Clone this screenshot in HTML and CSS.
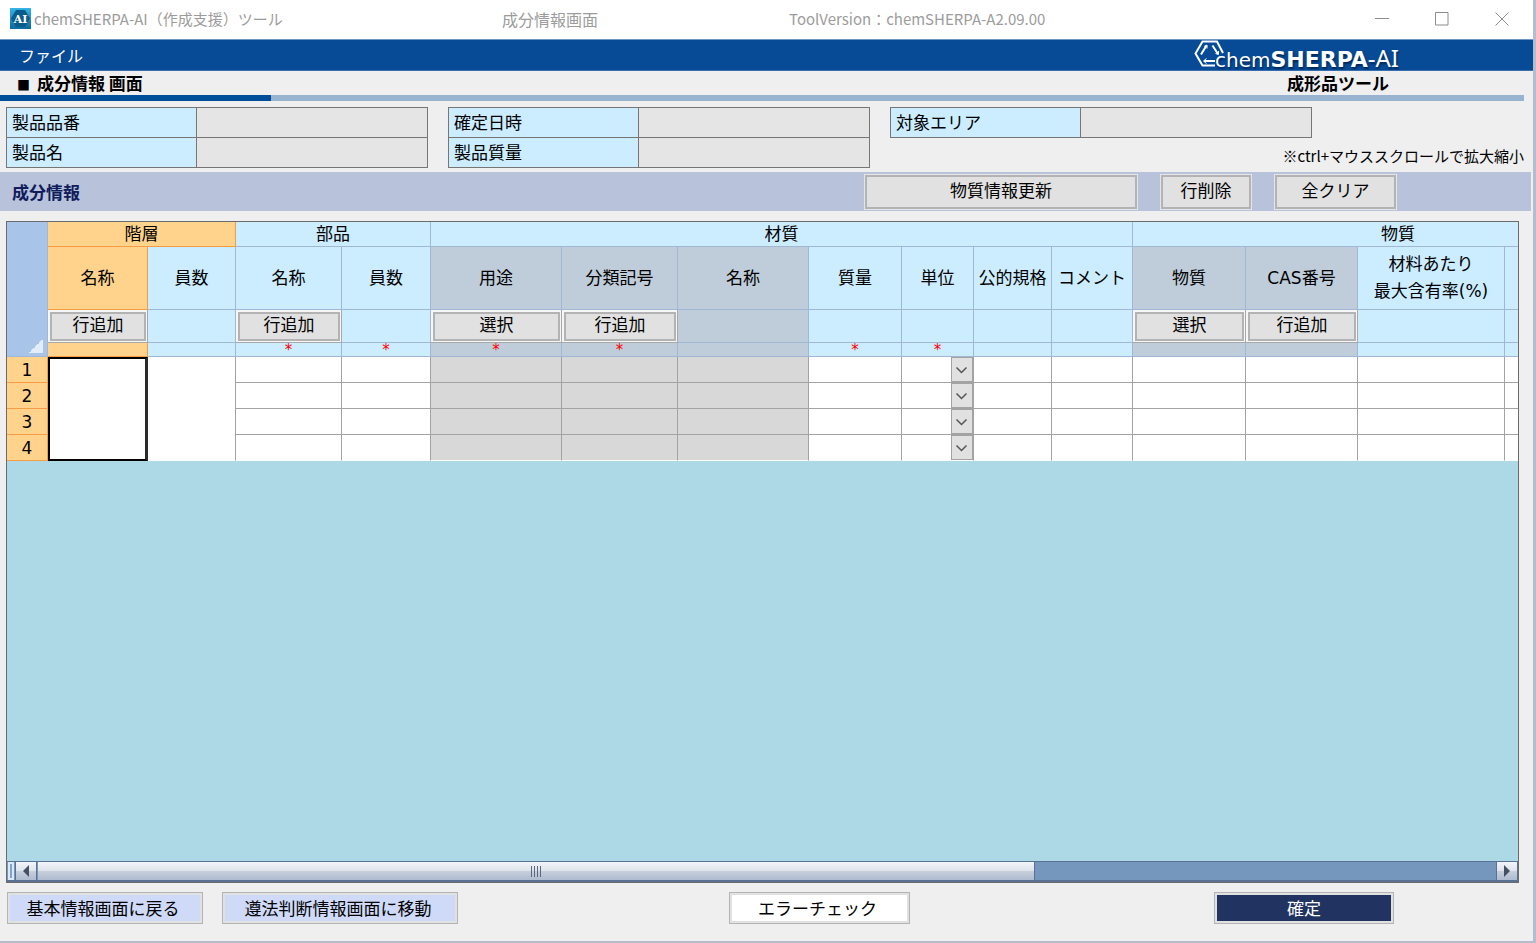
FILE: index.html
```html
<!DOCTYPE html>
<html lang="ja">
<head>
    <meta charset="utf-8">
    <title>chemSHERPA-AI 成分情報画面</title>
    <link rel="stylesheet" href="styles.css">
</head>
<body>
<div class="window">
    <header class="titlebar">
        <svg class="app-icon" viewBox="0 0 21 21">
            <defs>
                <linearGradient id="iconBg" x1="0" y1="0" x2="0" y2="1">
                    <stop offset="0" stop-color="#35b4e6"/>
                    <stop offset="1" stop-color="#0d6a9c"/>
                </linearGradient>
            </defs>
            <rect width="21" height="21" fill="url(#iconBg)"/>
            <path d="M6 2h9l5 8.500-5 8.500H6l-5-8.500z" fill="#0b5c8a"/>
            <text x="10.500" y="14.500" text-anchor="middle" class="app-icon-text">AI</text>
        </svg>
        <span class="title-app">chemSHERPA-AI（作成支援）ツール</span>
        <span class="title-screen">成分情報画面</span>
        <span class="title-version">ToolVersion：chemSHERPA-A2.09.00</span>
        <div class="window-buttons">
            <button type="button" aria-label="最小化"><svg viewBox="0 0 14 14"><path d="M0 6.500h14"/></svg></button>
            <button type="button" aria-label="最大化"><svg viewBox="0 0 14 14"><path d="M.5.5h12.500v12.500H.5z"/></svg></button>
            <button type="button" aria-label="閉じる"><svg viewBox="0 0 14 14"><path d="M.5.5l13 13M13.500.5l-13 13"/></svg></button>
        </div>
    </header>

    <nav class="menubar">
        <a href="#" class="menu-file">ファイル</a>
        <div class="logo">
            <svg class="logo-hex" viewBox="0 0 31 27">
                <path d="M29 13L23 1.500H8.500L1.500 13.500 8.500 25.500H21"/>
                <path d="M12.500 5.500L7 14.500M18.500 5.500L24 14M21 21H10"/>
                <path d="M10 6.500l3-1.500v3.500M21.500 13.500l3 1V11M12.500 18.500L9.500 21l3 2.500" class="logo-tip"/>
            </svg>
            <span class="logo-chem">chem</span><b class="logo-sherpa">SHERPA</b><span class="logo-ai">-AI</span>
        </div>
    </nav>

    <div class="heading">
        <h1><span class="square">■</span>成分情報 画面</h1>
        <strong class="tool-name">成形品ツール</strong>
    </div>
    <div class="rule"></div>

    <section class="info">
        <div class="fields">
            <label for="productNo">製品品番</label><input id="productNo" readonly>
            <label for="productName">製品名</label><input id="productName" readonly>
        </div>
        <div class="fields">
            <label for="fixedAt">確定日時</label><input id="fixedAt" readonly>
            <label for="productMass">製品質量</label><input id="productMass" readonly>
        </div>
        <div class="fields">
            <label for="area">対象エリア</label><input id="area" readonly>
        </div>
        <p class="note">※ctrl+マウススクロールで拡大縮小</p>
    </section>

    <section class="band">
        <h2>成分情報</h2>
        <button type="button" class="btn update">物質情報更新</button>
        <button type="button" class="btn delete">行削除</button>
        <button type="button" class="btn clear">全クリア</button>
    </section>

    <main class="sheet">
        <div class="sheet-view">
            <table>
                <colgroup>
                    <col class="w-no"><col class="w-100"><col class="w-88"><col class="w-106"><col class="w-89">
                    <col class="w-131"><col class="w-116"><col class="w-131"><col class="w-93"><col class="w-72">
                    <col class="w-78"><col class="w-81"><col class="w-113"><col class="w-112"><col class="w-147"><col class="w-159">
                </colgroup>
                <thead>
                    <tr class="row-group">
                        <th rowspan="4" class="corner"></th>
                        <th colspan="2" class="active">階層</th>
                        <th colspan="2">部品</th>
                        <th colspan="7">材質</th>
                        <th colspan="4">物質</th>
                    </tr>
                    <tr class="row-name">
                        <th class="active">名称</th>
                        <th>員数</th>
                        <th>名称</th>
                        <th>員数</th>
                        <th class="locked">用途</th>
                        <th class="locked">分類記号</th>
                        <th class="locked">名称</th>
                        <th>質量</th>
                        <th>単位</th>
                        <th>公的規格</th>
                        <th>コメント</th>
                        <th class="locked">物質</th>
                        <th class="locked">CAS番号</th>
                        <th>材料あたり<br>最大含有率(%)</th>
                        <th></th>
                    </tr>
                    <tr class="row-button">
                        <th class="has-btn active"><button type="button" class="cell-btn">行追加</button></th>
                        <th></th>
                        <th class="has-btn"><button type="button" class="cell-btn">行追加</button></th>
                        <th></th>
                        <th class="has-btn"><button type="button" class="cell-btn">選択</button></th>
                        <th class="has-btn"><button type="button" class="cell-btn">行追加</button></th>
                        <th class="locked"></th>
                        <th></th>
                        <th></th>
                        <th></th>
                        <th></th>
                        <th class="has-btn"><button type="button" class="cell-btn">選択</button></th>
                        <th class="has-btn"><button type="button" class="cell-btn">行追加</button></th>
                        <th></th>
                        <th></th>
                    </tr>
                    <tr class="row-required">
                        <th class="active"></th>
                        <th></th>
                        <th>*</th>
                        <th>*</th>
                        <th class="locked">*</th>
                        <th class="locked">*</th>
                        <th class="locked"></th>
                        <th>*</th>
                        <th>*</th>
                        <th></th>
                        <th></th>
                        <th class="locked"></th>
                        <th class="locked"></th>
                        <th></th>
                        <th></th>
                    </tr>
                </thead>
                <tbody>
                    <tr>
                        <th>1</th>
                        <td rowspan="4" class="selected"></td>
                        <td rowspan="4"></td>
                        <td></td><td></td>
                        <td class="locked"></td><td class="locked"></td><td class="locked"></td>
                        <td></td>
                        <td><select aria-label="単位 1"><option></option></select></td>
                        <td></td><td></td><td></td><td></td><td></td><td></td>
                    </tr>
                    <tr>
                        <th>2</th>
                        <td></td><td></td>
                        <td class="locked"></td><td class="locked"></td><td class="locked"></td>
                        <td></td>
                        <td><select aria-label="単位 2"><option></option></select></td>
                        <td></td><td></td><td></td><td></td><td></td><td></td>
                    </tr>
                    <tr>
                        <th>3</th>
                        <td></td><td></td>
                        <td class="locked"></td><td class="locked"></td><td class="locked"></td>
                        <td></td>
                        <td><select aria-label="単位 3"><option></option></select></td>
                        <td></td><td></td><td></td><td></td><td></td><td></td>
                    </tr>
                    <tr>
                        <th>4</th>
                        <td></td><td></td>
                        <td class="locked"></td><td class="locked"></td><td class="locked"></td>
                        <td></td>
                        <td><select aria-label="単位 4"><option></option></select></td>
                        <td></td><td></td><td></td><td></td><td></td><td></td>
                    </tr>
                </tbody>
            </table>
        </div>
        <div class="scrollbar">
            <span class="splitter"></span>
            <button type="button" class="arrow" aria-label="左へ"><svg viewBox="0 0 8 12"><path d="M7 0v12L1 6z"/></svg></button>
            <div class="track">
                <div class="thumb"><span class="grip"></span></div>
            </div>
            <button type="button" class="arrow" aria-label="右へ"><svg viewBox="0 0 8 12"><path d="M1 0v12l6-6z"/></svg></button>
        </div>
    </main>

    <footer class="actions">
        <button type="button" class="action back">基本情報画面に戻る</button>
        <button type="button" class="action move">遵法判断情報画面に移動</button>
        <button type="button" class="action check">エラーチェック</button>
        <button type="button" class="action confirm">確定</button>
    </footer>
</div>
</body>
</html>
```
FILE: styles.css
```css
* {
    box-sizing: border-box;
}

body {
    margin: 0;
    font-family: "Noto Sans CJK JP", sans-serif;
    font-size: 17px;
    line-height: 24px;
    color: #000;
    background: #efefef;
}

button, input, select {
    font: inherit;
    color: inherit;
    padding: 0;
    margin: 0;
}

.window {
    display: flex;
    flex-direction: column;
    min-height: 100vh;
    border-right: 3px solid #b4bccd;
    border-bottom: 2px solid #b4bccd;
}

/* title bar */
.titlebar {
    display: flex;
    align-items: center;
    height: 40px;
    padding: 0 0 2px 10px;
    background: #fff;
    color: #9c9c9c;
    font-size: 15px;
    border-bottom: 1px solid #6f96c2;
}

.app-icon {
    width: 21px;
    height: 21px;
    margin-right: 3px;
}

.app-icon-text {
    font: bold 11px "DejaVu Serif", serif;
    fill: #fff;
}

.title-app {
    width: 468px;
}

.title-screen {
    width: 287px;
    font-size: 16px;
}

.window-buttons {
    display: flex;
    gap: 46px;
    margin-left: auto;
    padding-right: 24px;
}

.window-buttons button {
    display: flex;
    border: 0;
    background: none;
}

.window-buttons svg {
    width: 14px;
    height: 14px;
    fill: none;
    stroke: #8c8c8c;
}

/* menu */
.menubar {
    display: flex;
    justify-content: space-between;
    align-items: center;
    height: 31px;
    padding: 0 134px 0 19px;
    background: #074a96;
    border-bottom: 1px solid #3a6fae;
}

.menu-file {
    color: #fff;
    font-size: 16px;
    text-decoration: none;
}

.logo {
    display: flex;
    align-items: baseline;
    color: #fff;
    font-family: "DejaVu Sans", sans-serif;
    font-size: 22px;
    line-height: 30px;
    padding-top: 4px;
    text-shadow: 1px 2px 2px #02285a;
}

.logo-hex {
    width: 31px;
    height: 27px;
    margin: 0 -10px -2px 0;
    fill: none;
    stroke: #fff;
    stroke-width: 2;
}

.logo-tip {
    stroke-width: 1;
}

.logo-chem {
    font-size: 20px;
}

.logo-ai {
    font-family: "Noto Sans", sans-serif;
    font-size: 24px;
}

/* heading */
.heading {
    display: flex;
    justify-content: space-between;
    height: 24px;
    padding: 0 144px 0 17px;
}

.heading h1 {
    margin: 0;
    font-size: 17px;
}

.square {
    display: inline-block;
    width: 20px;
    font-size: 13px;
}

.rule {
    height: 6px;
    margin-right: 9px;
    background: linear-gradient(to right, #004d99 271px, #98b3d0 271px);
}

/* product info */
.info {
    display: flex;
    align-items: flex-start;
    gap: 20px;
    padding: 6px 9px 4px 6px;
}

.fields {
    display: grid;
    grid-template-columns: 189px 230px;
    gap: 1px;
    padding: 1px;
    background: #767676;
}

.fields label {
    height: 29px;
    padding-left: 5px;
    background: #ccecff;
    line-height: 27px;
}

.fields input {
    width: 100%;
    height: 29px;
    border: 0;
    background: #e5e5e5;
}

.note {
    flex: 1;
    align-self: flex-end;
    margin: 0 0 0 -60px;
    font-size: 15px;
    text-align: right;
    white-space: nowrap;
}

/* section band */
.band {
    display: flex;
    align-items: center;
    height: 39px;
    margin-right: 2px;
    padding: 0 135px 0 12px;
    background: #b8c2db;
}

.band h2 {
    margin: 0 auto 0 0;
    font-size: 17px;
    color: #101c5c;
}

.btn, .cell-btn {
    padding-bottom: 3px;
    background: #e1e1e1;
    border: 2px solid #b3b3b3;
}

.btn {
    height: 34px;
    outline: 1px solid #e4e6ec;
}

.update {
    width: 272px;
    margin-right: 24px;
}

.delete {
    width: 90px;
    margin-right: 24px;
}

.clear {
    width: 121px;
}

/* spreadsheet */
.sheet {
    display: flex;
    flex-direction: column;
    flex: 1;
    min-width: 0;
    margin: 10px 14px 0 6px;
    border: 1px solid #6b6b6b;
    background: #add8e6;
}

.sheet-view {
    flex: 1;
    overflow: hidden;
}

.sheet table {
    table-layout: fixed;
    width: 1657px;
    border-collapse: separate;
    border-spacing: 0;
    font-family: "DejaVu Sans", "Noto Sans CJK JP", sans-serif;
}

.w-no { width: 41px; }
.w-72 { width: 72px; }
.w-78 { width: 78px; }
.w-81 { width: 81px; }
.w-88 { width: 88px; }
.w-89 { width: 89px; }
.w-93 { width: 93px; }
.w-100 { width: 100px; }
.w-106 { width: 106px; }
.w-112 { width: 112px; }
.w-113 { width: 113px; }
.w-116 { width: 116px; }
.w-131 { width: 131px; }
.w-147 { width: 147px; }
.w-159 { width: 159px; }

.sheet th, .sheet td {
    padding: 0;
    font-weight: normal;
    white-space: nowrap;
}

.sheet thead th {
    background: #ccecff;
    border-right: 1px solid #a0b8d6;
    border-bottom: 1px solid #a0b8d6;
}

.sheet thead .locked {
    background: #bfccda;
}

.sheet thead .active,
.sheet tbody th {
    background: #ffd38c;
    border-right: 1px solid #f59d45;
    border-bottom: 1px solid #f59d45;
}

.sheet thead .corner {
    background: linear-gradient(135deg, transparent 50%, #e3edfa 50%) no-repeat right 4px bottom 3px / 14px 14px, #a9c4e9;
}

.row-group {
    height: 25px;
    line-height: 22px;
}

.row-name {
    height: 63px;
    line-height: 27px;
}

.row-button {
    height: 33px;
}

.row-required {
    height: 14px;
    line-height: 12px;
    font-size: 15px;
    color: #f00;
}

.sheet thead .has-btn {
    padding: 2px 1px 1px 2px;
    background: #f6f6f6;
    border-color: #a8a8a8;
}

.cell-btn {
    display: block;
    width: 100%;
    height: 29px;
    line-height: 22px;
}

.sheet tbody tr {
    height: 26px;
}

.sheet td {
    background: #fff;
    border-right: 1px solid #a3a3a3;
    border-bottom: 1px solid #a3a3a3;
}

.sheet tbody tr:last-child td,
.sheet td[rowspan] {
    border-bottom-color: #fff;
}

.sheet td.locked {
    background: #d8d8d8;
}

.sheet td.selected {
    border: 2px solid #000;
    border-right: 3px solid #2b2b2b;
}

.sheet select {
    display: block;
    width: 100%;
    height: 25px;
    border: 0;
    border-radius: 0;
    appearance: none;
    background: url("data:image/svg+xml,%3Csvg xmlns='http://www.w3.org/2000/svg' width='22' height='25'%3E%3Crect x='.5' y='.5' width='21' height='24' fill='%23e1e1e1' stroke='%23a3a3a3'/%3E%3Cpath d='M5.500 10.500l5 5 5-5' fill='none' stroke='%23555' stroke-width='1.500'/%3E%3C/svg%3E") no-repeat right center;
}

/* scroll bar */
.scrollbar {
    display: flex;
    height: 21px;
    background: #7596bd;
    border-top: 1px solid #5a7196;
    border-bottom: 2px solid #5a7196;
}

.splitter {
    width: 6px;
    margin: 0 1px;
    border: 2px solid #dbe8f5;
    background: #7fa3cc;
}

.arrow {
    display: flex;
    align-items: center;
    justify-content: center;
    width: 22px;
    border: 1px solid #5a7196;
    border-width: 0 1px;
}

.arrow, .thumb {
    background: linear-gradient(#f2f4f8, #dfe4eb 48%, #c6cfdb 52%, #aebbd0);
}

.arrow svg {
    width: 8px;
    height: 12px;
    fill: #454f66;
}

.track {
    flex: 1;
    margin-left: 1px;
}

.thumb {
    display: flex;
    align-items: center;
    justify-content: center;
    width: 68.4%;
    height: 100%;
    border-right: 1px solid #5a7196;
}

.grip {
    width: 10px;
    height: 11px;
    background: repeating-linear-gradient(to right, #5c6780 0 1px, transparent 1px 3px);
}

/* footer buttons */
.actions {
    display: flex;
    padding: 9px 139px 17px 7px;
}

.action {
    height: 32px;
    padding-right: 4px;
    border: 1px solid #b4b4b4;
    box-shadow: inset 0 0 0 2px #e1e1e1;
    background: #cedaf8;
}

.back {
    width: 196px;
    margin-right: 19px;
}

.move {
    width: 236px;
}

.check {
    width: 181px;
    margin-left: 271px;
    background: #fff;
}

.confirm {
    width: 180px;
    margin-left: auto;
    padding: 0;
    background: #203361;
    color: #fff;
}
```
